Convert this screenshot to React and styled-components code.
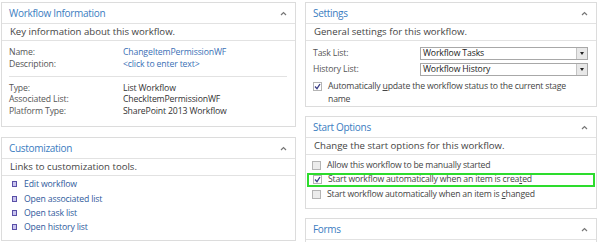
import React from 'react';
import styled, { createGlobalStyle } from 'styled-components';

const GlobalStyle = createGlobalStyle`
  body {
    margin: 0;
    background: #fff;
    font-family: "Open Sans", "Noto Sans", sans-serif;
    font-size: 8.7px;
    letter-spacing: -0.15px;
    color: #444;
    overflow: hidden;
  }
`

const Page = styled.div`
  display: grid;
  grid-template-columns: 295px 292px;
  column-gap: 9px;
  padding: 2px 0 0 1px;
  align-items: start;
`

const Column = styled.div`
  display: flex;
  flex-direction: column;
  gap: ${p => p.gap || 10}px;
`

const Panel = styled.section`
  border: 1px solid #dcdcdc;
  background: #fff;
  height: ${p => p.h ? p.h + 'px' : 'auto'};
  box-sizing: border-box;
  overflow: hidden;
`

const Header = styled.div`
  display: flex;
  align-items: center;
  justify-content: space-between;
  height: 20px;
  padding: 0 8px 0 7px;
  border-bottom: 1px solid #e2e2e2;
`

const Title = styled.h2`
  margin: 0;
  font-weight: 400;
  font-size: 10px;
  letter-spacing: -0.3px;
  color: #3b7dbf;
`

const Chevron = () => (
  <svg width="7" height="5" viewBox="0 0 7 5">
    <path d="M1 4 L3.5 1.5 L6 4" fill="none" stroke="#777" strokeWidth="1.2" />
  </svg>
)

const Desc = styled.div`
  height: 16px;
  line-height: 16px;
  padding: 0 8px;
  border-bottom: 1px solid #e2e2e2;
  font-size: 9.6px;
  letter-spacing: 0;
  color: #444;
`

const Body = styled.div`
  padding: ${p => p.pad || '6px 8px 0 7px'};
`

const InfoGrid = styled.div`
  display: grid;
  grid-template-columns: 114px 1fr;
  grid-auto-rows: 11.8px;
  align-items: center;
  line-height: 11.8px;
`

const Label = styled.span`
  color: #555;
`

const Value = styled.span`
  color: ${p => p.link ? '#3a6fb5' : '#333'};
`

const Rule = styled.hr`
  border: 0;
  border-top: 1px solid #e2e2e2;
  margin: 5px 0 6px 0;
`

const LinkList = styled.ul`
  list-style: none;
  margin: 0;
  padding: 1px 0 0 10px;
  display: flex;
  flex-direction: column;
`

const LinkItem = styled.li`
  display: flex;
  align-items: center;
  gap: 7px;
  height: 14.4px;
  color: #2f5a9c;
`

const Bullet = styled.span`
  width: 3px;
  height: 4px;
  border: 1px solid #5a50a8;
  background: #c9c4ee;
`

const FieldRow = styled.div`
  display: grid;
  grid-template-columns: 107px 1fr;
  align-items: center;
  height: 16px;
`

const Select = styled.div`
  display: flex;
  align-items: center;
  justify-content: space-between;
  height: 13px;
  box-sizing: border-box;
  border: 1px solid #a8a8a8;
  padding-left: 2px;
  margin-right: 8px;
  color: #222;
`

const SelectButton = styled.span`
  width: 10px;
  height: 11px;
  background: #e8e8e8;
  border-left: 1px solid #c4c4c4;
  display: flex;
  align-items: center;
  justify-content: center;
`

const Arrow = styled.span`
  width: 0;
  height: 0;
  border-left: 2.5px solid transparent;
  border-right: 2.5px solid transparent;
  border-top: 3px solid #222;
`

const CheckRow = styled.label`
  display: flex;
  align-items: ${p => p.top ? 'flex-start' : 'center'};
  gap: 6px;
  height: ${p => p.h || 14.5}px;
  padding: ${p => p.top ? '3px 0 0 0' : '0 6px'};
  box-sizing: border-box;
  color: #444;
  line-height: 13px;
  letter-spacing: -0.2px;
  outline: ${p => p.hl ? '2px solid #2ddc2d' : 'none'};
  outline-offset: -2px;
  margin: ${p => p.hl ? '0 1px 0 1px' : '0'};
  white-space: ${p => p.top ? 'normal' : 'nowrap'};
`

const CheckText = styled.span`
  max-width: ${p => p.max ? p.max + 'px' : 'none'};
`

const Box = styled.span`
  flex: none;
  width: 9px;
  height: 9px;
  box-sizing: border-box;
  border: 1px solid #b4b4b4;
  background: ${p => p.checked ? '#fff' : '#ececec'};
  margin-top: ${p => p.top ? '2px' : '0'};
  display: flex;
  align-items: center;
  justify-content: center;
`

const Check = () => (
  <svg width="7" height="7" viewBox="0 0 7 7">
    <path d="M1 3.5 L3 5.7 L6 1" fill="none" stroke="#3c3f88" strokeWidth="1.3" />
  </svg>
)

const U = styled.span`
  text-decoration: underline;
`

function PanelHead({ title }) {
  return (
    <Header>
      <Title>{title}</Title>
      <Chevron />
    </Header>
  )
}

export default function App() {
  return (
    <>
      <GlobalStyle />
      <Page>
        <Column gap={10}>
          <Panel h={125}>
            <PanelHead title="Workflow Information" />
            <Desc>Key information about this workflow.</Desc>
            <Body>
              <InfoGrid>
                <Label>Name:</Label>
                <Value link>ChangeItemPermissionWF</Value>
                <Label>Description:</Label>
                <Value link>&lt;click to enter text&gt;</Value>
              </InfoGrid>
              <Rule />
              <InfoGrid>
                <Label>Type:</Label>
                <Value>List Workflow</Value>
                <Label>Associated List:</Label>
                <Value>CheckItemPermissionWF</Value>
                <Label>Platform Type:</Label>
                <Value>SharePoint 2013 Workflow</Value>
              </InfoGrid>
            </Body>
          </Panel>
          <Panel h={104}>
            <PanelHead title="Customization" />
            <Desc>Links to customization tools.</Desc>
            <LinkList>
              {['Edit workflow', 'Open associated list', 'Open task list', 'Open history list'].map(t => (
                <LinkItem key={t}><Bullet />{t}</LinkItem>
              ))}
            </LinkList>
          </Panel>
        </Column>
        <Column gap={9}>
          <Panel h={105}>
            <PanelHead title="Settings" />
            <Desc>General settings for this workflow.</Desc>
            <Body pad="4px 0 0 7px">
              <FieldRow>
                <Label>Task List:</Label>
                <Select>Workflow Tasks<SelectButton><Arrow /></SelectButton></Select>
              </FieldRow>
              <FieldRow>
                <Label>History List:</Label>
                <Select>Workflow History<SelectButton><Arrow /></SelectButton></Select>
              </FieldRow>
              <CheckRow top h={28}>
                <Box checked top><Check /></Box>
                <CheckText max={252}>Automatically <U>u</U>pdate the workflow status to the current stage name</CheckText>
              </CheckRow>
            </Body>
          </Panel>
          <Panel h={93}>
            <PanelHead title="Start Options" />
            <Desc>Change the start options for this workflow.</Desc>
            <Body pad="3px 0 0 0">
              <CheckRow><Box /><CheckText>Allow this workflow to be manually started</CheckText></CheckRow>
              <CheckRow hl><Box checked><Check /></Box><CheckText>Start workflow automatically when an item is crea<U>t</U>ed</CheckText></CheckRow>
              <CheckRow><Box /><CheckText>Start workflow automatically when an item is <U>c</U>hanged</CheckText></CheckRow>
            </Body>
          </Panel>
          <Panel h={40}>
            <PanelHead title="Forms" />
          </Panel>
        </Column>
      </Page>
    </>
  )
}
